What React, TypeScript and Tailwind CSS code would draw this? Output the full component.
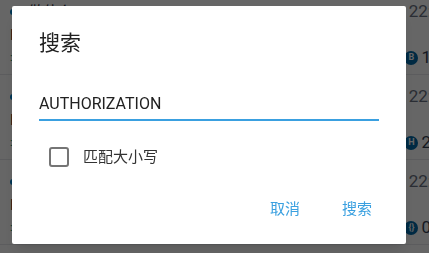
import { useState } from "react";

const rows = [
  { badge: "B", count: "1" },
  { badge: "H", count: "2" },
  { badge: "{}", count: "0" },
];

export default function App() {
  const [query, setQuery] = useState("AUTHORIZATION");
  const [matchCase, setMatchCase] = useState(false);

  return (
    <div
      className="relative w-[429px] h-[253px] overflow-hidden bg-white"
      style={{ fontFamily: "Roboto, 'Noto Sans CJK SC', sans-serif" }}
    >
      {/* list behind the dialog */}
      <div className="-mt-[10px]">
        {rows.map((r, i) => (
          <div key={i} className="h-[85px] border-b border-gray-200 flex flex-col pl-[10px] pt-[14px]">
            <div className="flex items-center h-[16px]">
              <span className="w-[6px] h-[6px] rounded-full bg-sky-600" />
              <span className="ml-[12px] text-[15px] text-gray-800">做什么</span>
              <span className="ml-auto mr-[-22px] text-[17px] text-gray-500">22:30</span>
            </div>
            <div className="h-[22px] text-[15px] text-gray-900 leading-[22px] mt-[4px]">I</div>
            <div className="flex items-center h-[20px] mt-[2px]">
              <span className="text-[11px] text-green-700">:</span>
              <span className="ml-auto w-[14px] h-[14px] rounded-full bg-sky-700 text-white text-[9px] font-bold flex items-center justify-center">
                {r.badge}
              </span>
              <span className="ml-[3px] mr-[-2px] text-[17px] text-gray-700">{r.count}</span>
            </div>
          </div>
        ))}
      </div>

      {/* scrim + dialog */}
      <div className="fixed inset-0 bg-black/60 pl-[12px] pt-[6px]">
        <div className="w-[394px] h-[238px] bg-white rounded-[2px] shadow-lg flex flex-col px-[27px]">
          <h2 className="mt-[23px] text-[21px] leading-[28px] text-[#212121]">搜索</h2>

          <div className="mt-[35px] border-b-2 border-[#3aa0e0]">
            <input
              value={query}
              onChange={(e) => setQuery(e.target.value)}
              className="w-full outline-none text-[16px] leading-[22px] pb-[4px] text-[#212121] bg-transparent"
            />
          </div>

          <label className="mt-[25px] flex items-center cursor-pointer">
            <span
              onClick={() => setMatchCase(!matchCase)}
              className={`ml-[10px] w-[20px] h-[20px] rounded-[3px] border-2 ${
                matchCase ? "bg-[#3aa0e0] border-[#3aa0e0]" : "border-[#757575]"
              }`}
            />
            <span className="ml-[14px] text-[15px] text-[#333]">匹配大小写</span>
          </label>

          <div className="mt-auto mb-[24px] flex justify-end gap-[42px] pr-[7px]">
            <button className="text-[15px] text-[#3aa0e0]">取消</button>
            <button className="text-[15px] text-[#3aa0e0]">搜索</button>
          </div>
        </div>
      </div>
    </div>
  );
}
